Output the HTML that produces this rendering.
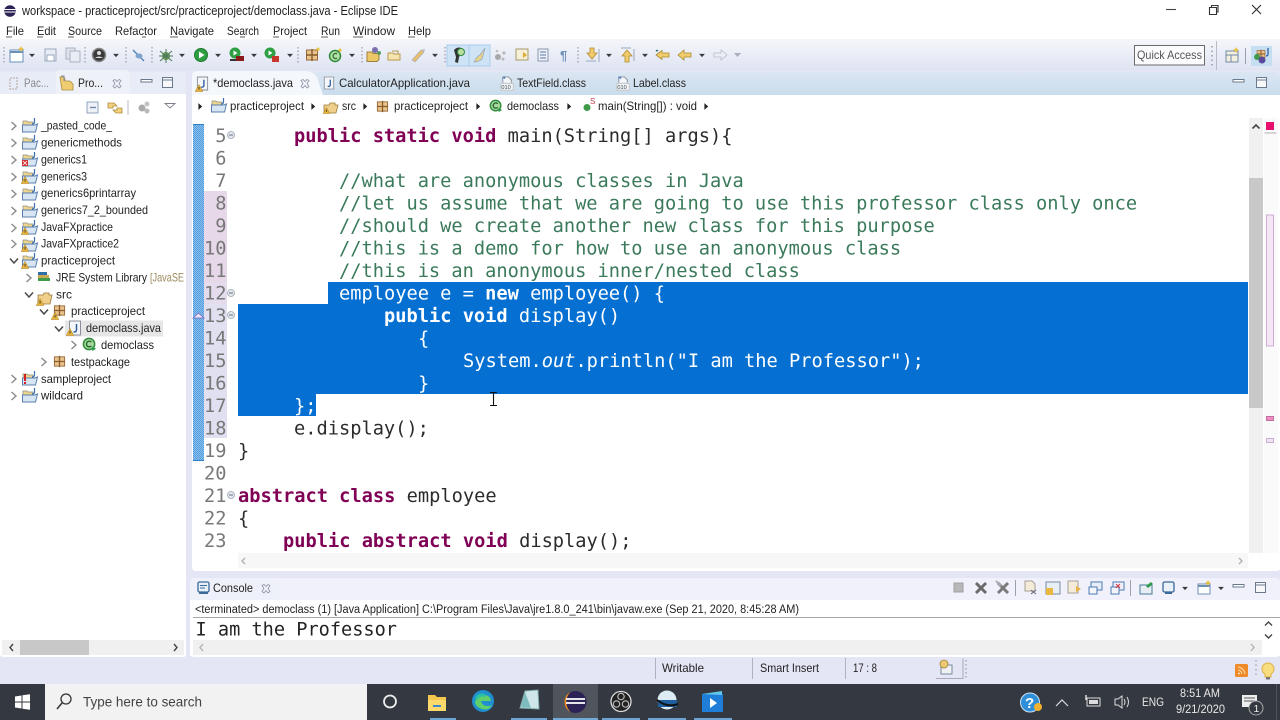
<!DOCTYPE html>
<html><head><meta charset="utf-8"><title>Eclipse IDE</title>
<style>
html,body{margin:0;padding:0;width:1280px;height:720px;overflow:hidden;background:#e4e6f6}
svg{display:block;position:absolute;left:0;top:0;filter:blur(.3px)}
text{font-family:"Liberation Sans",sans-serif;font-size:12px;fill:#222;white-space:pre}
.m text,text.m{font-family:"DejaVu Sans Mono","Liberation Mono",monospace;font-size:18.68px}
.c{fill:#3a7a5a}.k{fill:#7f0055;font-weight:bold}.d{fill:#2b2b2b}.w{fill:#fff}
.n{fill:#787878;font-family:"DejaVu Sans Mono",monospace;font-size:18.65px;text-anchor:end}
.ar{fill:#3c3c3c}
</style></head><body>
<svg width="1280" height="720" viewBox="0 0 1280 720" xmlns="http://www.w3.org/2000/svg">
<defs>
<linearGradient id="tb" x1="0" y1="0" x2="0" y2="1"><stop offset="0" stop-color="#f5f6fb"/><stop offset="1" stop-color="#dfe4f2"/></linearGradient>
<linearGradient id="tab" x1="0" y1="0" x2="0" y2="1"><stop offset="0" stop-color="#dbe6f2"/><stop offset="1" stop-color="#c9dcec"/></linearGradient>
<pattern id="dith" width="2" height="2" patternUnits="userSpaceOnUse"><rect width="2" height="2" fill="#8fc0ea"/><rect width="1" height="1" fill="#4f9de0"/><rect x="1" y="1" width="1" height="1" fill="#4f9de0"/></pattern>
<symbol id="pf" viewBox="0 0 16 16" overflow="visible"><path d="M1 3h4l1 1h5v3H1z" fill="#efd68e" stroke="#8a8a80" stroke-width=".7"/><path d="M.5 7h12.500l2.500-1-2 8H.5z" fill="#d8e6f4" stroke="#5a7fae"/><path d="M12.500 0v4q0 2-2.500 2" fill="none" stroke="#3c70b0" stroke-width="1.200"/></symbol>
<symbol id="warn" viewBox="0 0 8 8" overflow="visible"><path d="M4 .5L7.800 7.500H.2z" fill="#eab53c" stroke="#a87a16" stroke-width=".5"/><rect x="3.600" y="3" width=".9" height="2.600" fill="#333"/></symbol>
<symbol id="pkg" viewBox="0 0 14 14" overflow="visible"><rect x="1.500" y="2" width="11" height="10" fill="#e8c48c" stroke="#9a6a3a"/><path d="M7 1v12M1 7h12" stroke="#8a5a2a" stroke-width="1.400"/></symbol>
<symbol id="cls" viewBox="0 0 16 16" overflow="visible"><circle cx="7.500" cy="7.500" r="6" fill="#a8d8a0" stroke="#2f8a3a" stroke-width="1.600"/><path d="M10 5.500a3 3 0 1 0 0 4" fill="none" stroke="#1f6a2a" stroke-width="1.500"/><path d="M11 10l4 2.500-4 2.500z" fill="#2f9a4a"/></symbol>
<symbol id="jf" viewBox="0 0 14 16" overflow="visible"><path d="M1.500 1h11v14h-11z" fill="#f4f6fa" stroke="#8a8f9a"/><path d="M8.500 4v6q0 2-3 2" fill="none" stroke="#2f5f9f" stroke-width="1.500"/></symbol>
<symbol id="cf" viewBox="0 0 16 16" overflow="visible"><path d="M3 7V1h6l3 3v3" fill="#f4f6fa" stroke="#8a8f9a"/><rect x="1" y="8" width="13" height="7" fill="#f6f6f6" stroke="#b0b0b0" stroke-width=".6"/><text x="1.500" y="14" style="font-size:6px;fill:#345">010</text><path d="M5 3v-2q-2 0-2 2" fill="none" stroke="#3c70b0"/></symbol>
<symbol id="mn" viewBox="0 0 14 14" overflow="visible"><rect x="1" y="3.500" width="11" height="2.500" fill="#fff" stroke="#6a7a8e"/></symbol>
<symbol id="mx" viewBox="0 0 14 14" overflow="visible"><rect x="1.500" y="1.500" width="10" height="10" fill="#f8f8fb" stroke="#6a7a8e"/><path d="M1.500 4h10" stroke="#6a7a8e"/></symbol>
<symbol id="tclose" viewBox="0 0 10 10" overflow="visible"><path d="M1 1.500l2 -1 2 2 2-2 2 1-2 3 2 3-2 1.500-2-2.500-2 2.500-2-1.500 2-3z" fill="#f2f3f8" stroke="#8a92a2" stroke-width=".8"/></symbol>
<symbol id="dd" viewBox="0 0 8 6" overflow="visible"><path d="M.5 1h7L4 5z" fill="#3a3a3a"/></symbol>
<symbol id="cr" viewBox="0 0 8 10" overflow="visible"><path d="M1.500 1L6 5 1.500 9" fill="none" stroke="#8a8a8a" stroke-width="1.400"/></symbol>
<symbol id="cd" viewBox="0 0 10 8" overflow="visible"><path d="M1 1.500L5 6l4-4.500" fill="none" stroke="#4a4a4a" stroke-width="1.500"/></symbol>
<symbol id="rt" viewBox="0 0 6 10" overflow="visible"><path d="M.5 1L5 5 .5 9z" fill="#222"/></symbol>
<symbol id="fold" viewBox="0 0 8 8" overflow="visible"><circle cx="4" cy="4" r="3.500" fill="#e4e8ee" stroke="#9aa4b0" stroke-width=".8"/><path d="M2 4h4" stroke="#66707c"/></symbol>
</defs>

<!-- title bar -->
<rect x="0" y="0" width="1280" height="40" fill="#fff"/>
<circle cx="10" cy="11" r="5.800" fill="#2c2255"/><path d="M4.500 9.500h11M4.300 12h11.400" stroke="#fff" stroke-width="1.100"/>
<text x="22" y="15" textLength="376" lengthAdjust="spacingAndGlyphs" style="font-size:12.500px">workspace - practiceproject/src/practiceproject/democlass.java - Eclipse IDE</text>
<path d="M1166 9.500h10" stroke="#444" stroke-width="1.100"/>
<path d="M1209.500 7.500h7v7h-7zM1211.500 7.500v-2h6.500v6.500h-2" fill="none" stroke="#333" stroke-width="1.100"/>
<path d="M1252 5l9 9M1261 5l-9 9" stroke="#333" stroke-width="1.200"/>

<!-- menu -->
<g style="font-size:12px">
<text x="6" y="35" textLength="18" lengthAdjust="spacingAndGlyphs">File</text>
<text x="37" y="35" textLength="19" lengthAdjust="spacingAndGlyphs">Edit</text>
<text x="68" y="35" textLength="34" lengthAdjust="spacingAndGlyphs">Source</text>
<text x="115" y="35" textLength="42" lengthAdjust="spacingAndGlyphs">Refactor</text>
<text x="170" y="35" textLength="44" lengthAdjust="spacingAndGlyphs">Navigate</text>
<text x="227" y="35" textLength="32" lengthAdjust="spacingAndGlyphs">Search</text>
<text x="273" y="35" textLength="34" lengthAdjust="spacingAndGlyphs">Project</text>
<text x="321" y="35" textLength="19" lengthAdjust="spacingAndGlyphs">Run</text>
<text x="353" y="35" textLength="42" lengthAdjust="spacingAndGlyphs">Window</text>
<text x="408" y="35" textLength="23" lengthAdjust="spacingAndGlyphs">Help</text>
</g>
<path d="M6 37h6M37 37h6M68 37h6M142 37h4M170 37h8M240 37h5M273 37h6M321 37h7M353 37h10M408 37h7" stroke="#2a2a2a" stroke-width=".8"/>

<!-- toolbar -->
<rect x="0" y="39" width="1280" height="31" fill="url(#tb)"/>
<rect x="447" y="45" width="43" height="21" fill="#cfe3f6" stroke="#a8cdec"/>
<path d="M469 45v21" stroke="#a8cdec"/>
<g stroke="#9a9aa8" stroke-dasharray="1.500 2" stroke-width="1.200">
<path d="M4 47v16M85 47v16M126 47v16M152 47v16M298 47v16M362 47v16M445 47v16M578 47v16"/></g>
<rect x="10" y="50" width="13" height="12" fill="#fff" stroke="#6a8fb8"/><path d="M10 52h13" stroke="#6a8fb8" stroke-width="2"/><path d="M21 46l1 2 2 1-2 1-1 2-1-2-2-1 2-1z" fill="#e8c040"/>
<g fill="none" stroke="#9aa8bc"><rect x="45" y="49" width="11" height="12" fill="#e8ecf4"/><rect x="47" y="55" width="7" height="6" fill="#fff"/></g>
<g fill="none" stroke="#a8b2c2"><rect x="66" y="48" width="9" height="11" fill="#e0e4ec"/><rect x="70" y="51" width="10" height="11" fill="#e8ecf4"/></g>
<circle cx="99" cy="55" r="6.500" fill="#3a3a3a" stroke="#888" stroke-width="1.500"/><circle cx="99" cy="53" r="2" fill="#ddd"/><path d="M95 58q4-3 8 0" fill="#ddd"/>
<path d="M133 50l11 11" stroke="#4a7fb8" stroke-width="1.300"/><ellipse cx="139" cy="56" rx="3.500" ry="2.500" fill="#7fa4cc"/>
<circle cx="166" cy="56" r="4" fill="#6f9a5a"/><path d="M160 51l12 10M172 51l-12 10M159 56h14M166 49v14" stroke="#4a7a5a"/>
<circle cx="201" cy="55" r="6.500" fill="#2f9f44" stroke="#1f7a30"/><path d="M199 51.500l5.500 3.500-5.500 3.500z" fill="#fff"/>
<circle cx="235" cy="53" r="5.500" fill="#2f9f44"/><path d="M233.500 50.500l4 2.500-4 2.500z" fill="#fff"/><rect x="236" y="56" width="8" height="5" fill="#8a1a1a"/><rect x="230" y="59" width="6" height="2" fill="#333"/>
<circle cx="270" cy="53" r="5.500" fill="#2f9f44"/><path d="M268.500 50.500l4 2.500-4 2.500z" fill="#fff"/><rect x="272" y="56" width="7" height="6" fill="#c8352a"/>
<use href="#pkg" x="305" y="48" width="14" height="14"/><path d="M318 47l1 1.500 1.500 .5-1.500 1-1 1.500-1-1.500-1.500-1 1.500-.5z" fill="#e8c040"/>
<circle cx="335" cy="56" r="5.500" fill="#b6dea8" stroke="#2f8a3a" stroke-width="1.500"/><path d="M337 54a2.500 2.500 0 1 0 0 4" fill="none" stroke="#1f6a2a" stroke-width="1.200"/><path d="M340 48l1 1.500 1.500 .5-1.500 1-1 1.500-1-1.500-1.500-1 1.500-.5z" fill="#e8c040"/>
<path d="M367 52h5l1 1.500h5l1-1v7l-2 2h-10z" fill="#ecc868" stroke="#a08040"/><circle cx="375" cy="50" r="3" fill="#7a6fb0"/><circle cx="379" cy="53" r="2" fill="#5a9a5a"/>
<path d="M388 53h5l1 1h6v6h-12z" fill="#f6e4b0" stroke="#b8984c"/><path d="M392 51h6v3" fill="none" stroke="#b8984c"/>
<path d="M412 60l9-10 3 2-9 10z" fill="#e8c070" stroke="#a8a8a8" stroke-width=".6"/><path d="M421 50l3 2 1-3z" fill="#b8b8c0"/>
<path d="M454 50q5-5 10 0l-5 7 -1 6-3-1 1-5z" fill="#333"/><circle cx="461" cy="52" r="3.500" fill="#b8e0a0" stroke="#2f8a3a"/>
<path d="M474 62q3-6 6-7l5-7-3 11q-4 3-8 3z" fill="#e8d488" stroke="#9aa8bc" stroke-width=".8"/>
<circle cx="498" cy="57" r="3" fill="#a8a8a8"/><circle cx="504" cy="53" r="1.600" fill="#b8b8b8"/><circle cx="497" cy="51" r="1.300" fill="#c0c0c0"/><circle cx="503" cy="59" r="1.500" fill="#b8b8b8"/>
<rect x="516" y="49" width="12" height="11" fill="#f5efd8" stroke="#a89a6c"/><path d="M523 52l4 3-4 3z" fill="#e0a830"/>
<rect x="538" y="49" width="10" height="12" fill="#eef0f8" stroke="#8a98b0"/><path d="M540 52h6M540 55h6M540 58h6" stroke="#5a78a8"/>
<text x="560" y="60" style="font-size:13px;fill:#6f90b8;font-weight:bold">¶</text>
<path d="M590 48h4v5h3l-5 6-5-6h3z" fill="#f2cc6c" stroke="#b08a30" stroke-width=".8"/><path d="M586 61h10M599 49v13" stroke="#9aa8bc"/>
<path d="M625 62h4v-6h3l-5-6-5 6h3z" fill="#f2cc6c" stroke="#b08a30" stroke-width=".8"/><path d="M621 48h10M634 49v12" stroke="#9aa8bc"/>
<path d="M656 55l6-4.500v2.500h7v4h-7v2.500z" fill="#f2cc6c" stroke="#a88a30" stroke-width=".8"/><path d="M656 50l1 1 1-1" stroke="#2f6f6f" stroke-width="1.200"/>
<path d="M678 55l6-5v3h7v4h-7v3z" fill="#f2cc6c" stroke="#a88a30" stroke-width=".8"/>
<path d="M727 55l-6-5v3h-7v4h7v3z" fill="#eceef6" stroke="#b8bcc8" stroke-width=".8"/>
<use href="#dd" x="28" y="53" width="8" height="5"/><use href="#dd" x="112" y="53" width="8" height="5"/><use href="#dd" x="178" y="53" width="8" height="5"/><use href="#dd" x="214" y="53" width="8" height="5"/><use href="#dd" x="250" y="53" width="8" height="5"/><use href="#dd" x="286" y="53" width="8" height="5"/><use href="#dd" x="348" y="53" width="8" height="5"/><use href="#dd" x="431" y="53" width="8" height="5"/><use href="#dd" x="605" y="53" width="8" height="5"/><use href="#dd" x="641" y="53" width="8" height="5"/><use href="#dd" x="698" y="53" width="8" height="5"/>
<path d="M734 53h7l-3.500 4z" fill="#aab0bc"/>
<rect x="1134.500" y="45.500" width="70" height="19.500" fill="#fbfbfd" stroke="#6a6a6a"/>
<text x="1137" y="59" textLength="65" lengthAdjust="spacingAndGlyphs" style="fill:#555">Quick Access</text>
<path d="M1212 46v20" stroke="#9a9aa8" stroke-dasharray="1.500 3" stroke-width="1.500"/><path d="M1216.500 41v29" stroke="#b8bcc8"/>
<rect x="1226" y="51" width="12" height="11" fill="#f3eedd" stroke="#6f8aa8"/><path d="M1226 55h12M1231 55v7" stroke="#6f8aa8"/><path d="M1236 47l1 2 2 1-2 1-1 2-1-2-2-1 2-1z" fill="#e8c040"/>
<path d="M1245.500 48v16" stroke="#9aa0ac"/>
<rect x="1251" y="46" width="21" height="20" fill="#c6def2"/>
<use href="#pkg" x="1256" y="49" width="10" height="10"/><circle cx="1257" cy="57" r="3" fill="#3f9a4a"/><circle cx="1262" cy="60" r="3.500" fill="#5a4a9a"/><path d="M1268 48v6q0 2-2 2" fill="none" stroke="#2f5fa8" stroke-width="1.300"/>

<!-- left panel -->
<path d="M0 72H1V72H184q2 0 2 2V654q0 3-3 3H4q-4 0-4-3z" fill="#fff"/>
<path d="M0 72h184q2 0 2 2v21H0z" fill="#e7ecf6"/>
<path d="M56 94V74q0-4 4-4h64q6 0 6 4v20z" fill="#eef2f8"/>
<rect x="0" y="94" width="186" height="24" fill="#fff"/>
<g stroke="#9aa8ac"><rect x="10" y="78" width="7" height="11" fill="none" stroke="#b0a8a0" stroke-dasharray="2 1"/></g>
<text x="24" y="87" textLength="25" lengthAdjust="spacingAndGlyphs" style="fill:#8a8a8a">Pac...</text>
<path d="M60 77h4l1 2v2h5l3 3v6H62z" fill="#f0cc70" stroke="#a88a40" stroke-width=".8"/><path d="M61 76h3v5" fill="none" stroke="#88a"/>
<text x="78" y="87" textLength="25" lengthAdjust="spacingAndGlyphs">Pro...</text>
<use href="#tclose" x="112" y="79" width="10" height="10"/>
<use href="#mn" x="140" y="76" width="14" height="14"/><use href="#mx" x="161" y="76" width="14" height="14"/>
<rect x="87" y="102" width="11" height="11" fill="#eef2f8" stroke="#90a4bc"/><path d="M90 107.500h6" stroke="#6a84a8" stroke-width="1.300"/>
<path d="M108 103h6l3 3h-4v2h-5zM122 113h-6l-3-3h4v-2h5z" fill="#f2d27c" stroke="#b08a40" stroke-width=".8"/>
<path d="M128 100v15" stroke="#b8bcc8"/>
<circle cx="142" cy="108" r="3.500" fill="#aaa"/><circle cx="147" cy="104" r="2.500" fill="#c4c4c4"/><circle cx="147" cy="111" r="2.500" fill="#b8b8b8"/>
<path d="M165 103.500h10l-5 4.500z" fill="#fff" stroke="#7a7f8a" stroke-width=".9"/>

<!-- tree -->
<rect x="65" y="320.500" width="98" height="16" fill="#e6e6e6"/>
<g>
<use href="#cr" x="10" y="121" width="8" height="10"/><use href="#cr" x="10" y="138" width="8" height="10"/><use href="#cr" x="10" y="155" width="8" height="10"/><use href="#cr" x="10" y="172" width="8" height="10"/><use href="#cr" x="10" y="189" width="8" height="10"/><use href="#cr" x="10" y="206" width="8" height="10"/><use href="#cr" x="10" y="223" width="8" height="10"/><use href="#cr" x="10" y="239" width="8" height="10"/>
<use href="#cd" x="9" y="257" width="10" height="8"/>
<use href="#cr" x="25" y="273" width="8" height="10"/><use href="#cd" x="24" y="291" width="10" height="8"/><use href="#cd" x="39" y="308" width="10" height="8"/><use href="#cd" x="54" y="325" width="10" height="8"/>
<use href="#cr" x="70" y="340" width="8" height="10"/><use href="#cr" x="40" y="357" width="8" height="10"/>
<use href="#cr" x="10" y="374" width="8" height="10"/><use href="#cr" x="10" y="391" width="8" height="10"/>
</g>
<use href="#pf" x="22" y="118" width="16" height="16"/><use href="#pf" x="22" y="135" width="16" height="16"/><use href="#pf" x="22" y="152" width="16" height="16"/><use href="#pf" x="22" y="169" width="16" height="16"/><use href="#pf" x="22" y="186" width="16" height="16"/><use href="#pf" x="22" y="203" width="16" height="16"/><use href="#pf" x="22" y="220" width="16" height="16"/><use href="#pf" x="22" y="237" width="16" height="16"/><use href="#pf" x="22" y="253" width="16" height="16"/><use href="#pf" x="22" y="371" width="16" height="16"/><use href="#pf" x="22" y="388" width="16" height="16"/>
<rect x="22" y="160" width="6" height="6" fill="#d03030"/><path d="M23 161l4 4M27 161l-4 4" stroke="#fff" stroke-width=".8"/>
<use href="#warn" x="21" y="176" width="8" height="8"/><use href="#warn" x="21" y="227" width="8" height="8"/><use href="#warn" x="21" y="244" width="8" height="8"/><use href="#warn" x="21" y="261" width="8" height="8"/>
<rect x="24" y="374" width="2" height="7" fill="#d82020"/><rect x="24" y="382" width="2" height="2" fill="#d82020"/>
<rect x="38" y="278" width="12" height="3" fill="#3f9a4a"/><rect x="38" y="275" width="11" height="3" fill="#c8a850"/><rect x="38" y="272" width="9" height="3" fill="#2f6fa8"/>
<path d="M38 295h5l1-2h5v2h3l-2 9H38z" fill="#efcf8a" stroke="#9a7a3a" stroke-width=".8"/><use href="#warn" x="36" y="298" width="8" height="8"/>
<use href="#pkg" x="53" y="304" width="13" height="13"/><use href="#warn" x="51" y="312" width="8" height="8"/>
<use href="#jf" x="68" y="320" width="14" height="16"/><use href="#warn" x="66" y="328" width="8" height="8"/>
<use href="#cls" x="82" y="337" width="15" height="15"/>
<use href="#pkg" x="53" y="355" width="13" height="13"/>
<g style="font-size:12px">
<text x="41" y="129.500" textLength="71" lengthAdjust="spacingAndGlyphs">_pasted_code_</text>
<text x="41" y="146.500" textLength="81" lengthAdjust="spacingAndGlyphs">genericmethods</text>
<text x="41" y="163.500" textLength="46" lengthAdjust="spacingAndGlyphs">generics1</text>
<text x="41" y="180.500" textLength="46" lengthAdjust="spacingAndGlyphs">generics3</text>
<text x="41" y="197" textLength="95" lengthAdjust="spacingAndGlyphs">generics6printarray</text>
<text x="41" y="214" textLength="107" lengthAdjust="spacingAndGlyphs">generics7_2_bounded</text>
<text x="41" y="231" textLength="72" lengthAdjust="spacingAndGlyphs">JavaFXpractice</text>
<text x="41" y="247.500" textLength="78" lengthAdjust="spacingAndGlyphs">JavaFXpractice2</text>
<text x="41" y="264.500" textLength="74" lengthAdjust="spacingAndGlyphs">practiceproject</text>
<text x="56" y="281.500" textLength="91" lengthAdjust="spacingAndGlyphs">JRE System Library</text>
<text x="150" y="281.500" textLength="34" lengthAdjust="spacingAndGlyphs" style="fill:#9a8a5c">[JavaSE</text>
<text x="56" y="298.500">src</text>
<text x="71" y="315" textLength="74" lengthAdjust="spacingAndGlyphs">practiceproject</text>
<text x="86" y="332" textLength="75" lengthAdjust="spacingAndGlyphs">democlass.java</text>
<text x="101" y="349" textLength="53" lengthAdjust="spacingAndGlyphs">democlass</text>
<text x="71" y="366" textLength="59" lengthAdjust="spacingAndGlyphs">testpackage</text>
<text x="41" y="383" textLength="70" lengthAdjust="spacingAndGlyphs">sampleproject</text>
<text x="41" y="399.500" textLength="42" lengthAdjust="spacingAndGlyphs">wildcard</text>
</g>
<rect x="2" y="640" width="182" height="15" fill="#f0f0f0"/><rect x="20" y="640" width="69" height="15" fill="#c8c8c8"/>
<path d="M13 644l-3 3.500 3 3.500M174 644l3 3.500-3 3.500" fill="none" stroke="#444" stroke-width="1.400"/>

<!-- editor panel -->
<path d="M192 76q0-4 4-4h1080q4 0 4 4v492q0 3-3 3H196q-4 0-4-4z" fill="#fff"/>
<path d="M192 95V76q0-4 4-4h1080q4 0 4 4v19z" fill="url(#tab)"/>
<path d="M192 95V76q0-5 5-5h108q8 0 12 6l6 18z" fill="#f4f7fb"/>
<use href="#jf" x="196" y="76" width="13" height="15"/><use href="#warn" x="195" y="84" width="8" height="8"/>
<text x="213" y="87" textLength="80" lengthAdjust="spacingAndGlyphs">*democlass.java</text>
<use href="#tclose" x="300" y="79" width="10" height="10"/>
<use href="#jf" x="323" y="76" width="12" height="14"/>
<text x="339" y="87" textLength="131" lengthAdjust="spacingAndGlyphs">CalculatorApplication.java</text>
<use href="#cf" x="500" y="76" width="15" height="15"/>
<text x="517" y="87" textLength="69" lengthAdjust="spacingAndGlyphs">TextField.class</text>
<use href="#cf" x="616" y="76" width="15" height="15"/>
<text x="633" y="87" textLength="53" lengthAdjust="spacingAndGlyphs">Label.class</text>
<use href="#mn" x="1232" y="76" width="14" height="14"/><use href="#mx" x="1255" y="76" width="14" height="14"/>

<!-- breadcrumb -->
<use href="#rt" x="198" y="102" width="5" height="9"/>
<use href="#pf" x="211" y="98" width="16" height="16"/>
<text x="230" y="110" textLength="74" lengthAdjust="spacingAndGlyphs">practiceproject</text>
<use href="#rt" x="311" y="102" width="5" height="9"/>
<path d="M324 105h5l1-2h5v2h3l-2 8H324z" fill="#efcf8a" stroke="#9a7a3a" stroke-width=".8"/><use href="#warn" x="323" y="107" width="7" height="7"/>
<text x="342" y="110" textLength="14" lengthAdjust="spacingAndGlyphs">src</text>
<use href="#rt" x="363" y="102" width="5" height="9"/>
<use href="#pkg" x="376" y="100" width="13" height="13"/>
<text x="394" y="110" textLength="74" lengthAdjust="spacingAndGlyphs">practiceproject</text>
<use href="#rt" x="476" y="102" width="5" height="9"/>
<use href="#cls" x="489" y="99" width="14" height="14"/>
<text x="507" y="110" textLength="52" lengthAdjust="spacingAndGlyphs">democlass</text>
<use href="#rt" x="567" y="102" width="5" height="9"/>
<circle cx="587" cy="107.500" r="3.500" fill="#3f9a4a"/><text x="590" y="104" style="font-size:8px;fill:#c04050">S</text>
<text x="598" y="110" textLength="99" lengthAdjust="spacingAndGlyphs">main(String[]) : void</text>
<use href="#rt" x="704" y="102" width="5" height="9"/>

<!-- gutter -->
<rect x="204" y="191" width="23" height="91" fill="#e6d8e8"/>
<rect x="204" y="282" width="23" height="22" fill="#e4dcec"/>
<rect x="204" y="304" width="23" height="134" fill="#e0e0f0"/>
<rect x="193" y="124" width="11" height="337" fill="url(#dith)"/>
<path d="M193 124.500h11M193 460.500h11" stroke="#2f7fc8"/>
<path d="M193 318l5.500-5 5.500 5z" fill="#e8e4f8" stroke="#7a5fc0" stroke-width=".8"/>
<g class="n">
<text class="n" x="226.500" y="142">5</text><text class="n" x="226.500" y="164.500">6</text><text class="n" x="226.500" y="187">7</text><text class="n" x="226.500" y="209.500">8</text><text class="n" x="226.500" y="232">9</text><text class="n" x="226.500" y="254.500">10</text><text class="n" x="226.500" y="277">11</text><text class="n" x="226.500" y="299.500">12</text><text class="n" x="226.500" y="322">13</text><text class="n" x="226.500" y="344.500">14</text><text class="n" x="226.500" y="367">15</text><text class="n" x="226.500" y="389.500">16</text><text class="n" x="226.500" y="412">17</text><text class="n" x="226.500" y="434.500">18</text><text class="n" x="226.500" y="457">19</text><text class="n" x="226.500" y="479.500">20</text><text class="n" x="226.500" y="502">21</text><text class="n" x="226.500" y="524.500">22</text><text class="n" x="226.500" y="547">23</text>
</g>
<use href="#fold" x="227" y="131" width="8" height="8"/><use href="#fold" x="227" y="289" width="8" height="8"/><use href="#fold" x="227" y="311" width="8" height="8"/><use href="#fold" x="227" y="491" width="8" height="8"/>

<!-- selection -->
<path d="M328 282H1248V394H316V416H238V304H328z" fill="#0570d2"/>

<!-- code -->
<g class="m">
<text x="294" y="142"><tspan class="k">public static void</tspan><tspan class="d"> main(String[] args){</tspan></text>
<text x="339" y="187" class="c">//what are anonymous classes in Java</text>
<text x="339" y="209.500" class="c">//let us assume that we are going to use this professor class only once</text>
<text x="339" y="232" class="c">//should we create another new class for this purpose</text>
<text x="339" y="254.500" class="c">//this is a demo for how to use an anonymous class</text>
<text x="339" y="277" class="c">//this is an anonymous inner/nested class</text>
<text x="339" y="299.500" class="w">employee e = <tspan font-weight="bold">new</tspan> employee() {</text>
<text x="384" y="322" class="w"><tspan font-weight="bold">public void</tspan> display()</text>
<text x="418" y="344.500" class="w">{</text>
<text x="463" y="367" class="w">System.<tspan font-style="italic">out</tspan>.println("I am the Professor");</text>
<text x="418" y="389.500" class="w">}</text>
<text x="294" y="412" class="w">};</text>
<text x="294" y="434.500" class="d">e.display();</text>
<text x="238" y="457" class="d">}</text>
<text x="238" y="502"><tspan class="k">abstract class</tspan><tspan class="d"> employee</tspan></text>
<text x="238" y="524.500" class="d">{</text>
<text x="283" y="547"><tspan class="k">public abstract void</tspan><tspan class="d"> display();</tspan></text>
</g>
<!-- I-beam -->
<path d="M490 392.500h7M493.500 393v12M490 405.500h7" stroke="#111" stroke-width="1.100" fill="none"/>

<!-- editor scrollbars -->
<rect x="1249" y="118" width="14" height="435" fill="#f0f0f0"/>
<rect x="1249" y="178" width="14" height="230" fill="#c8c8c8"/>
<path d="M1252.500 128.500l3.500-3.500 3.500 3.500" fill="none" stroke="#444" stroke-width="1.600"/>
<rect x="1264" y="118" width="14" height="435" fill="#fafafa"/>
<path d="M1264.500 133h12" stroke="#b0b0b0"/>
<rect x="1266" y="122" width="8" height="8" fill="#e8106e"/>
<rect x="1266.500" y="215" width="7" height="131" fill="#f4e6f4" stroke="#cfaed6"/>
<rect x="1266.500" y="416.500" width="7" height="4" fill="#f08cc0" stroke="#c070a0"/>
<rect x="1266.500" y="438.500" width="7" height="4" fill="#f0e4f2" stroke="#c8b0d4"/>
<rect x="238" y="553" width="1010" height="15" fill="#f7f7f7"/>
<path d="M245 558l-3 3 3 3M1239 558l3 3-3 3" fill="none" stroke="#b0b0b0" stroke-width="1.300"/>

<!-- console panel -->
<path d="M190 600V582q0-4 4-4h1082q4 0 4 4v18z" fill="#f0f1fb"/>
<path d="M190 600V583q0-5 5-5h72q8 0 11 6v16z" fill="#eef1f9"/>
<rect x="190" y="600" width="1090" height="56" fill="#fff"/>
<path d="M190 600v52q0 5 5 5h1081q4 0 4-4v-53z" fill="#fff"/>
<rect x="198" y="582" width="11" height="10" rx="1.500" fill="#e8f0f8" stroke="#3a6a9a" stroke-width="1.300"/><path d="M200 585.500h7M200 588h5" stroke="#3a6a9a"/><rect x="199" y="592" width="9" height="2" fill="#3a6a9a"/>
<text x="213" y="592" textLength="40" lengthAdjust="spacingAndGlyphs">Console</text>
<use href="#tclose" x="261" y="584" width="10" height="10"/>
<rect x="954" y="583" width="9" height="9" fill="#b8b8b8" stroke="#a0a0a0"/>
<path d="M976 583l10 10M986 583l-10 10" stroke="#6a6a6a" stroke-width="3"/>
<path d="M998 583l10 10M1008 583l-10 10" stroke="#7a7a7a" stroke-width="3"/><path d="M996 581l5 5" stroke="#aab" stroke-width="2"/>
<path d="M1015.500 580v16M1130.500 580v16" stroke="#9aa0ac"/>
<path d="M1025 581h7l3 3v7h-10z" fill="#f4ecd8" stroke="#a8a098"/><path d="M1031 590l5 4M1036 590l-5 4" stroke="#667"/>
<rect x="1046" y="582" width="14" height="12" fill="#e8eef6" stroke="#7a8aa0"/><rect x="1046" y="588" width="7" height="7" fill="#e8b840"/>
<rect x="1068" y="581" width="10" height="12" fill="#f4ecd8" stroke="#a8a098"/><path d="M1076 586l5 3-5 3z" fill="#e8b040"/>
<rect x="1091" y="582" width="11" height="8" fill="#e8eef8" stroke="#4a7ab0"/><rect x="1089" y="587" width="8" height="7" fill="#f4f6fa" stroke="#4a7ab0"/>
<rect x="1113" y="582" width="11" height="8" fill="#f4f0f8" stroke="#4a7ab0"/><rect x="1111" y="587" width="8" height="7" fill="#f4f6fa" stroke="#4a7ab0"/><path d="M1116 584l4 4M1120 584l-4 4" stroke="#d03040"/>
<rect x="1140" y="585" width="12" height="9" fill="#e8eef4" stroke="#4a7a9a"/><path d="M1146 586l5-4 2 2-5 4z" fill="#2f9a4a"/>
<rect x="1163" y="582" width="11" height="10" rx="1.500" fill="#e8f0f8" stroke="#3a6a9a" stroke-width="1.300"/><rect x="1165" y="592" width="7" height="2" fill="#3a6a9a"/>
<rect x="1198" y="584" width="12" height="10" fill="#fff" stroke="#6f8fb0"/><path d="M1198 586h12" stroke="#6f8fb0" stroke-width="2"/><path d="M1208 580l1 2 2 1-2 1-1 2-1-2-2-1 2-1z" fill="#e8c040"/>
<use href="#dd" x="1181" y="586" width="8" height="5"/><use href="#dd" x="1217" y="586" width="8" height="5"/>
<use href="#mn" x="1232" y="581" width="14" height="14"/><use href="#mx" x="1254" y="581" width="14" height="14"/>
<text x="195" y="613" textLength="604" lengthAdjust="spacingAndGlyphs" style="font-size:11.500px">&lt;terminated&gt; democlass (1) [Java Application] C:\Program Files\Java\jre1.8.0_241\bin\javaw.exe (Sep 21, 2020, 8:45:28 AM)</text>
<path d="M193 617.500h1087" stroke="#a8a8a8"/>
<text class="m" x="195.500" y="635.500" style="fill:#222;font-size:18.600px">I am the Professor</text>
<rect x="193" y="640" width="1069" height="15" fill="#f0f0f0"/>
<path d="M1265 625.500l3.500-3.500 3.500 3.500M1265 634.500l3.500 3.500 3.500-3.500" fill="none" stroke="#444" stroke-width="1.400"/>
<path d="M203 644l-3 3.500 3 3.500M1251 644l3 3.500-3 3.500" fill="none" stroke="#b0b0b0" stroke-width="1.300"/>

<!-- status bar -->
<path d="M655.500 658v21M752.500 658v21M845.500 658v21" stroke="#b0b2c0"/>
<text x="662" y="672" textLength="42" lengthAdjust="spacingAndGlyphs">Writable</text>
<text x="760" y="672" textLength="59" lengthAdjust="spacingAndGlyphs">Smart Insert</text>
<text x="853" y="672" textLength="24" lengthAdjust="spacingAndGlyphs">17 : 8</text>
<path d="M936 678.500h27v-20" fill="none" stroke="#a8aab8"/>
<rect x="941" y="665" width="11" height="9" fill="#eef0f4" stroke="#7a8a9a"/><circle cx="944" cy="664" r="4" fill="#ecc870" stroke="#a08040" stroke-width=".8"/>
<path d="M966 660v18" stroke="#9a9aa8" stroke-dasharray="1.500 2.500" stroke-width="1.200"/>
<rect x="1235" y="664" width="13" height="13" rx="1.500" fill="#f08a28"/><path d="M1238 667a8 8 0 0 1 7 7M1238 670a5 5 0 0 1 4 4" fill="none" stroke="#ffe0b0"/><circle cx="1239" cy="673.500" r="1" fill="#ffe0b0"/>
<path d="M1256 660v18" stroke="#9a9aa8" stroke-dasharray="1.500 3" stroke-width="1.200"/>
<path d="M1265 677v-3q-3-2-3-5a6 6 0 0 1 12 0q0 3-3 5v3z" fill="#f8dc80" stroke="#e0b040"/><rect x="1266" y="677" width="4" height="2.500" fill="#777"/>

<!-- taskbar -->
<rect x="0" y="684" width="1280" height="36" fill="#343840"/>
<path d="M15 696.500l6.500-1v6h-6.500zM22.500 695.300l7.500-1v7.200h-7.500zM15 702.500h6.500v6l-6.500-1zM22.500 702.500h7.500v7.200l-7.500-1z" fill="#fff"/>
<rect x="45" y="684" width="322" height="36" fill="#f2f2f2"/>
<circle cx="66" cy="699" r="5" fill="none" stroke="#333" stroke-width="1.300"/><path d="M62 703l-5 6" stroke="#333" stroke-width="1.500"/>
<text x="83" y="706.500" textLength="119" lengthAdjust="spacingAndGlyphs" style="font-size:14px;fill:#444">Type here to search</text>
<circle cx="390" cy="701.500" r="6" fill="none" stroke="#eee" stroke-width="1.800"/>
<rect x="553" y="684" width="45" height="36" fill="#50545c"/>
<path d="M428 695h7l2 2h9v14h-18z" fill="#f2c84e"/><rect x="428" y="700" width="18" height="11" fill="#fbd96a"/><rect x="433" y="705" width="8" height="2" fill="#3f88c8"/>
<circle cx="483" cy="701" r="11" fill="#1f8fd0"/><path d="M475 703q1-8 9-8 6 0 7 6h-10q1 5 7 5 3 0 4-1-3 6-10 4-6-2-7-6z" fill="#5fd06a"/><path d="M476 699q4-6 9-3" fill="none" stroke="#2ac0a8" stroke-width="3"/>
<path d="M520 708l5-17 13-1 1 19z" fill="#cfe6e8" stroke="#7fa8a8"/><path d="M525 692l-4 15 10 1z" fill="#7fbcc0"/>
<circle cx="575.500" cy="702" r="11" fill="#2c2255"/><path d="M564.500 702a11 11 0 0 1 6-10a14 14 0 0 0 0 20a11 11 0 0 1-6-10z" fill="#e88a20"/><path d="M566 699h19M566 703h19" stroke="#fff" stroke-width="1.700"/>
<circle cx="621" cy="701.500" r="10" fill="#222" stroke="#ddd" stroke-width="1.300"/><circle cx="621" cy="696.500" r="3.200" fill="none" stroke="#bbb" stroke-width="1.200"/><circle cx="616.500" cy="704" r="3.200" fill="none" stroke="#bbb" stroke-width="1.200"/><circle cx="625.500" cy="704" r="3.200" fill="none" stroke="#bbb" stroke-width="1.200"/>
<circle cx="667" cy="700" r="9.500" fill="#dcebf4"/><path d="M658 700h19v7h-19z" fill="#1f5f9f"/><path d="M657 700q10 8 21 4" fill="none" stroke="#111" stroke-width="2"/>
<rect x="702" y="694" width="21" height="18" fill="#1f7fd8"/><path d="M702 694l20-3v4z" fill="#5fc8ec"/><path d="M710 698l7 5-7 5z" fill="#fff"/>
<g fill="#76b9ed" opacity=".85"><rect x="430" y="718" width="26" height="2"/><rect x="511" y="718" width="36" height="2"/><rect x="553" y="718" width="45" height="2"/><rect x="602" y="718" width="38" height="2"/><rect x="648" y="718" width="38" height="2"/><rect x="694" y="718" width="38" height="2"/></g>
<circle cx="1030" cy="702.500" r="9.500" fill="#2f8ed8" stroke="#cfe4f6"/><text x="1025" y="708" style="font-size:15px;font-weight:bold;fill:#fff">?</text><circle cx="1038" cy="707" r="4" fill="#f0b030"/>
<path d="M1056 706l6-6 6 6" fill="none" stroke="#ddd" stroke-width="1.200"/>
<rect x="1087" y="698" width="13" height="8" fill="none" stroke="#ddd"/><rect x="1089" y="700" width="9" height="4" fill="#ddd"/><path d="M1086 695v5" stroke="#ddd" stroke-width="1.500"/>
<path d="M1115 699h3l4-3v12l-4-3h-3z" fill="none" stroke="#ddd"/><path d="M1124 699q2 3 0 6M1127 697q3 5 0 10" fill="none" stroke="#ddd"/>
<text x="1142" y="706" textLength="22" lengthAdjust="spacingAndGlyphs" style="fill:#e8e8e8">ENG</text>
<text x="1180" y="697" textLength="40" lengthAdjust="spacingAndGlyphs" style="fill:#e8e8e8">8:51 AM</text>
<text x="1176" y="713" textLength="49" lengthAdjust="spacingAndGlyphs" style="fill:#e8e8e8">9/21/2020</text>
<path d="M1242 695h15v12h-4l-3 3v-3h-8z" fill="#eee"/><path d="M1244 698h11M1244 701h11" stroke="#555"/>
<circle cx="1256" cy="708" r="7" fill="#343840" stroke="#aaa"/><text x="1253.500" y="712" style="font-size:10.500px;fill:#eee">1</text>
<path d="M1276.500 684v36" stroke="#50545c"/>
</svg>
</body></html>
